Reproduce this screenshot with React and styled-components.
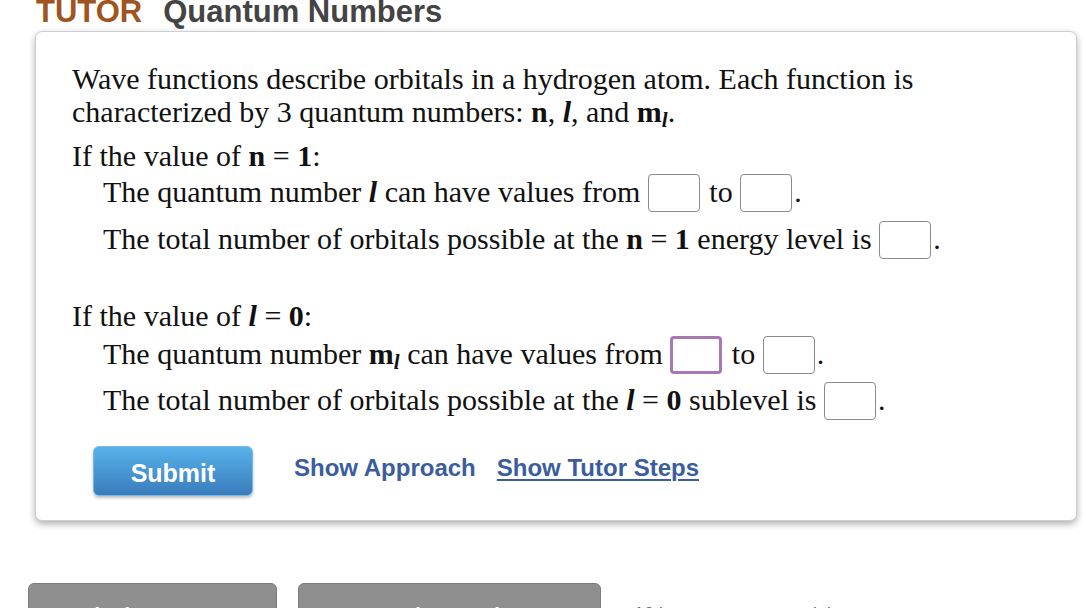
import React from "react";
import styled, { createGlobalStyle } from "styled-components";

const Global = createGlobalStyle`
  html, body {
    margin: 0;
    padding: 0;
    background: #fff;
    overflow: hidden;
  }
  body {
    font-family: "Liberation Sans", Arial, sans-serif;
  }
`;

const Page = styled.div`
  width: 1086px;
  height: 608px;
  overflow: hidden;
`;

const Header = styled.h1`
  margin: -3px 0 0 36px;
  font-family: "Liberation Sans", Arial, sans-serif;
  font-size: 31px;
  line-height: 30px;
  font-weight: bold;
  color: #444;
  display: flex;
  gap: 21px;
`;

const Tag = styled.span`
  color: #a0541e;
`;

const Card = styled.div`
  margin: 4px 9px 0 35px;
  border: 1px solid #cfcfcf;
  border-radius: 7px;
  background: #fff;
  box-shadow: 0 3px 7px rgba(0, 0, 0, 0.32);
  padding: 30px 36px 24px 36px;
  font-family: "Liberation Serif", "Times New Roman", serif;
  font-size: 30px;
  color: #111;
`;

const Para = styled.p`
  margin: 0;
  line-height: 33px;
`;

const Line = styled.div`
  margin-top: ${(p) => p.$gap || 0}px;
  padding-left: ${(p) => (p.$indent ? 31 : 0)}px;
  line-height: ${(p) => (p.$tall ? 40 : 33)}px;
  height: ${(p) => (p.$tall ? 40 : 33)}px;
  white-space: nowrap;
`;

const B = styled.b`
  font-weight: bold;
`;

const L = styled.b`
  font-weight: bold;
  font-style: italic;
`;

const Sub = styled.sub`
  font-size: 0.7em;
  font-weight: bold;
  font-style: italic;
  vertical-align: -0.22em;
  line-height: 0;
`;

const Box = styled.span`
  display: inline-block;
  box-sizing: border-box;
  width: 52px;
  height: 38px;
  margin: 0 2px 0 0;
  vertical-align: -10px;
  border: ${(p) => (p.$active ? "3px solid #a779b4" : "1px solid #8a8a8a")};
  border-radius: 4px;
  background: #fff;
`;

const Actions = styled.div`
  margin: 26px 0 0 21px;
  display: flex;
  align-items: center;
`;

const SubmitBtn = styled.button`
  width: 160px;
  height: 50px;
  border: 1px solid #79b9e8;
  border-radius: 6px;
  background: linear-gradient(#57b2ea, #3a7cbc);
  box-shadow: 0 2px 3px rgba(0, 0, 0, 0.25);
  color: #fff;
  font-family: "Liberation Sans", Arial, sans-serif;
  font-size: 25px;
  font-weight: bold;
  padding: 4px 0 0;
`;

const TextLink = styled.a`
  margin-left: ${(p) => p.$gap}px;
  margin-top: -6px;
  font-family: "Liberation Sans", Arial, sans-serif;
  font-size: 24px;
  font-weight: bold;
  color: #3a5d9e;
  text-decoration: ${(p) => (p.$underline ? "underline" : "none")};
  text-underline-offset: 3px;
  text-decoration-thickness: 2px;
  cursor: pointer;
`;

const Footer = styled.div`
  margin: 62px 0 0 28px;
  display: flex;
  align-items: flex-start;
  gap: 21px;
`;

const GrayBtn = styled.button`
  width: ${(p) => p.$w}px;
  height: 44px;
  border: 1px solid #7c7c7c;
  border-radius: 6px;
  background: #8f8f8f;
  color: #fff;
  font-family: "Liberation Sans", Arial, sans-serif;
  font-size: 20px;
  font-weight: bold;
  text-align: left;
  padding: 20px 0 0 ${(p) => p.$pad}px;
`;

const Attempts = styled.span`
  margin: 21px 0 0 12px;
  font-family: "Liberation Sans", Arial, sans-serif;
  font-size: 18px;
  color: #666;
`;

export default function App() {
  return (
    <Page>
      <Global />
      <Header>
        <Tag>TUTOR</Tag>
        <span>Quantum Numbers</span>
      </Header>
      <Card>
        <Para>
          Wave functions describe orbitals in a hydrogen atom. Each function is
          <br />
          characterized by 3 quantum numbers: <B>n</B>, <L>l</L>, and{" "}
          <B>m</B>
          <Sub>l</Sub>.
        </Para>
        <Line $gap={11}>
          If the value of <B>n</B> = <B>1</B>:
        </Line>
        <Line $indent $tall>
          The quantum number <L>l</L> can have values from <Box /> to <Box />.
        </Line>
        <Line $indent $tall $gap={7}>
          The total number of orbitals possible at the <B>n</B> = <B>1</B>{" "}
          energy level is <Box />.
        </Line>
        <Line $gap={40}>
          If the value of <L>l</L> = <B>0</B>:
        </Line>
        <Line $indent $tall $gap={2}>
          The quantum number <B>m</B>
          <Sub>l</Sub> can have values from <Box $active /> to <Box />.
        </Line>
        <Line $indent $tall $gap={6}>
          The total number of orbitals possible at the <L>l</L> = <B>0</B>{" "}
          sublevel is <Box />.
        </Line>
        <Actions>
          <SubmitBtn>Submit</SubmitBtn>
          <TextLink $gap={41}>Show Approach</TextLink>
          <TextLink $gap={21} $underline>
            Show Tutor Steps
          </TextLink>
        </Actions>
      </Card>
      <Footer>
        <GrayBtn $w={249} $pad={40}>
          Submit Answer
        </GrayBtn>
        <GrayBtn $w={303} $pad={36}>
          Try Another Version
        </GrayBtn>
        <Attempts>10 item attempts remaining</Attempts>
      </Footer>
    </Page>
  );
}
